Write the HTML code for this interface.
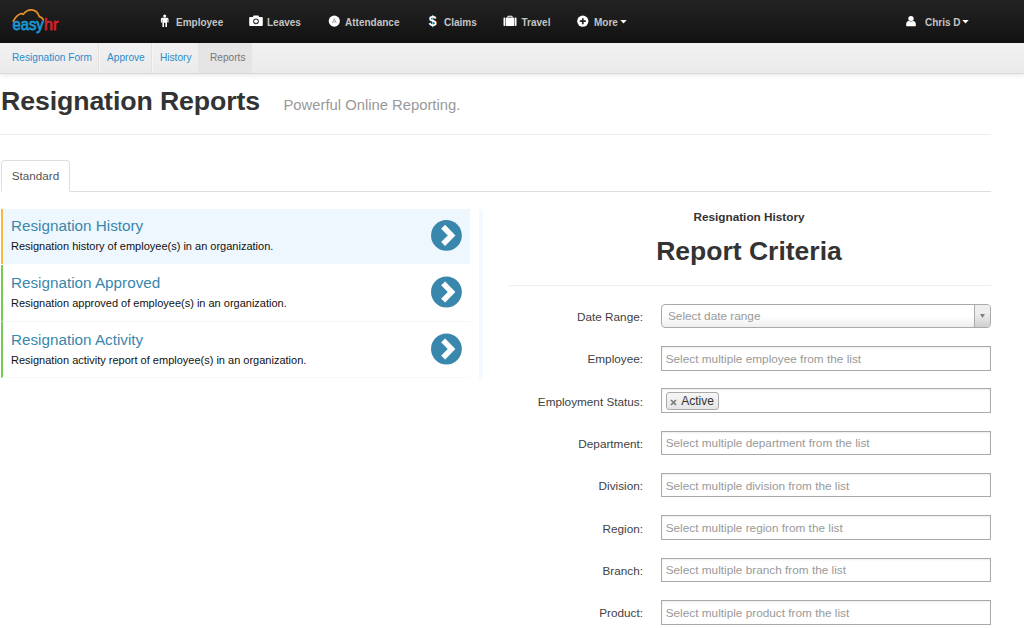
<!DOCTYPE html>
<html><head><meta charset="utf-8">
<style>
*{box-sizing:border-box;margin:0;padding:0}
html,body{width:1024px;height:628px;overflow:hidden;background:#fff}
body{font-family:"Liberation Sans",sans-serif;position:relative;color:#333}
.abs{position:absolute;white-space:nowrap}
#nav{position:absolute;left:0;top:0;width:1024px;height:43px;background:linear-gradient(#222 0,#1b1b1b 50%,#111 100%);}
.ni{position:absolute;top:16.7px;font-size:10px;font-weight:bold;color:#c4c4c4;line-height:12px;white-space:nowrap}
.ic{position:absolute}
#sub{position:absolute;left:0;top:43px;width:1024px;height:30.500px;background:linear-gradient(#f1f1f1,#ebebeb);border-bottom:1px solid #d8d8d8;box-shadow:0 1px 5px rgba(0,0,0,.1)}
.si{position:absolute;top:0;height:29px;line-height:29px;font-size:10.15px;color:#2a8ccb;white-space:nowrap}
.sd{position:absolute;top:0;height:29.500px;background:#e2e2e2;border-right:1px solid #f5f5f5;width:2px}
h1{position:absolute;left:1px;top:84px;font-size:26.7px;line-height:34px;font-weight:bold;color:#333;white-space:nowrap;letter-spacing:-0.1px}
.hr{position:absolute;height:1px;background:#eee}
.tab{position:absolute;left:1px;top:160px;width:69px;height:32px;border:1px solid #dedede;border-bottom:1px solid #fff;border-radius:4px 4px 0 0;background:#fff;font-size:11.7px;line-height:30px;text-align:center;color:#555}
.li{position:absolute;left:1px;width:469.200px;height:56px;border-left:2px solid #76cb55;border-bottom:1px solid #f6f6f6}
.li .t{position:absolute;left:8px;top:8px;font-size:15.25px;line-height:18px;color:#3a87ad;white-space:nowrap}
.li .d{position:absolute;left:8px;top:31.2px;font-size:11px;line-height:13px;color:#111;white-space:nowrap}
.l2 .t{top:8.600px !important}.l2 .d{top:32.300px !important}
.li svg{position:absolute;left:426px;top:9px}.l2 svg{top:10px}
.lab{position:absolute;width:200px;left:443px;text-align:right;font-size:11.75px;line-height:14px;color:#414141;white-space:nowrap}
.inp{position:absolute;left:661px;width:330px;height:24.4px;border:1px solid #aaa;background:#fff;font-size:11.8px;line-height:14px;color:#999;padding-left:3.7px;white-space:nowrap;box-shadow:inset 0 1px 2px rgba(0,0,0,.08)}
</style></head><body>
<div id="nav">
 <svg class="ic" style="left:10px;top:6px" width="54" height="32" viewBox="0 0 54 32">
  <path d="M3.3,15.2 C5,12 7.5,9 10.5,7.8 C11.6,7.3 12.6,7.7 13.3,8.3 C15.5,5.2 18.5,3.8 21.3,3.8 C26,3.8 28.3,7.6 29.3,10.6 C31.3,11 32.7,12.4 33.3,14" fill="none" stroke="#e8912a" stroke-width="1.7" stroke-linecap="round" stroke-linejoin="round"/>
  <text x="2.500" y="24.000" font-family="Liberation Sans" font-size="16" fill="#1a97d2" stroke="#1a97d2" stroke-width=".75" stroke-linejoin="round" textLength="31.200" lengthAdjust="spacingAndGlyphs">easy</text>
  <text x="34.000" y="24.000" font-family="Liberation Sans" font-size="16" fill="#d0222d" stroke="#d0222d" stroke-width=".75" stroke-linejoin="round" textLength="14.300" lengthAdjust="spacingAndGlyphs">hr</text>
 </svg>
 <!-- employee -->
 <svg class="ic" style="left:160px;top:14px" width="10" height="13" viewBox="0 0 10 13"><circle cx="4.7" cy="1.9" r="1.5" fill="#fff"/><path d="M2.3,3.8h4.8c.8,0,1.4.6,1.4,1.4v3.3h-1.2v-3h-.3v7.5h-1.6v-4.2h-1.4v4.2h-1.6v-7.5h-.3v3h-1.2v-3.300c0-.8.600-1.400,1.400-1.400z" fill="#fff"/></svg>
 <div class="ni" style="left:176px">Employee</div>
 <!-- leaves camera -->
 <svg class="ic" style="left:249px;top:15px" width="14" height="12" viewBox="0 0 14 12"><path d="M1.500,2h2.300l.8-1.600h4.800l.8,1.600h2.300c.8,0,1.300.5,1.300,1.300v6.400c0,.8-.5,1.300-1.300,1.300h-11c-.8,0-1.300-.5-1.300-1.300v-6.400c0-.8.500-1.300,1.300-1.300z" fill="#fff"/><circle cx="7" cy="6.300" r="2.900" fill="#333"/><circle cx="7" cy="6.300" r="1.800" fill="#fff"/></svg>
 <div class="ni" style="left:267px">Leaves</div>
 <!-- attendance -->
 <svg class="ic" style="left:328px;top:15px" width="13" height="13" viewBox="0 0 13 13"><circle cx="6.300" cy="6.100" r="5.600" fill="#fff"/><path d="M4.300,8.200l2-4.600l2,4.600M5,6.800h2.600" fill="none" stroke="#999" stroke-width=".8"/></svg>
 <div class="ni" style="left:345px">Attendance</div>
 <!-- claims -->
 <div class="ni" style="left:428.800px;top:13.200px;font-size:14.200px;line-height:16px;color:#fff">$</div>
 <div class="ni" style="left:444px">Claims</div>
 <!-- travel -->
 <svg class="ic" style="left:503px;top:15px" width="14" height="12" viewBox="0 0 14 12"><path d="M4.400,2.700v-1c0-.5.400-.9.900-.9h3.400c.5,0,.9.400.9.900v1h-1v-.9h-3.200v.9z" fill="#fff"/><rect x="0.500" y="2.600" width="1.900" height="8.400" rx=".8" fill="#fff"/><rect x="2.900" y="2.600" width="8.200" height="8.400" fill="#fff"/><rect x="11.600" y="2.600" width="1.900" height="8.400" rx=".8" fill="#fff"/></svg>
 <div class="ni" style="left:521.500px">Travel</div>
 <!-- more -->
 <svg class="ic" style="left:576px;top:15px" width="13" height="13" viewBox="0 0 13 13"><circle cx="6.800" cy="6.200" r="5.600" fill="#fff"/><path d="M6.800,3.200v6M3.800,6.200h6" stroke="#222" stroke-width="1.700" fill="none"/></svg>
 <div class="ni" style="left:594px">More</div>
 <svg class="ic" style="left:619.800px;top:19.700px" width="8" height="4" viewBox="0 0 8 4"><path d="M0.300,0h6.400l-3.200,3.400z" fill="#fff"/></svg>
 <!-- user -->
 <svg class="ic" style="left:905px;top:15px" width="12" height="12" viewBox="0 0 12 12"><circle cx="6" cy="3.600" r="2.700" fill="#fff"/><path d="M1.200,11.200v-2.200c0-1.800,1.300-3,2.700-3.300c.6.600,1.300.9,2.100.9s1.500-.3,2.100-.9c1.400.3,2.700,1.500,2.700,3.300v2.200z" fill="#fff"/></svg>
 <div class="ni" style="left:925px">Chris D</div>
 <svg class="ic" style="left:962.400px;top:19.700px" width="8" height="4" viewBox="0 0 8 4"><path d="M0.300,0h6.400l-3.200,3.400z" fill="#fff"/></svg>
</div>
<div id="sub">
 <div style="position:absolute;left:198.200px;top:0;width:53.600px;height:29.500px;background:#e5e5e5"></div>
 <div class="si" style="left:12px">Resignation Form</div>
 <div class="sd" style="left:98px"></div>
 <div class="si" style="left:107px">Approve</div>
 <div class="sd" style="left:151px"></div>
 <div class="si" style="left:160px">History</div>
 <div class="si" style="left:210px;color:#777">Reports</div>
</div>
<h1>Resignation Reports</h1>
<div class="abs" style="left:283.5px;top:96px;font-size:14.8px;line-height:18px;color:#999">Powerful Online Reporting.</div>
<div class="hr" style="left:0;top:134px;width:991px"></div>
<div class="hr" style="left:1px;top:191px;width:990px;background:#dedede"></div>
<div class="tab">Standard</div>

<div class="li" style="top:209px;height:55.3px;background:#eef6fe;border-left-color:#f8b941;border-bottom:0">
 <div class="t">Resignation History</div><div class="d">Resignation history of employee(s) in an organization.</div>
 <svg width="34" height="34" viewBox="-17.430 -17.380 34 34"><circle r="15.400" fill="#3a87ad"/><path d="M-1.300,-10.300L8.700,0L-1.300,10.300L-5,6.700L1.600,0L-5,-6.700z" fill="#fff" stroke="#fff" stroke-width=".5" stroke-linejoin="round"/></svg>
</div>
<div class="li l2" style="top:265px;height:57px">
 <div class="t">Resignation Approved</div><div class="d">Resignation approved of employee(s) in an organization.</div>
 <svg width="34" height="34" viewBox="-17.430 -17 34 34"><circle r="15.400" fill="#3a87ad"/><path d="M-1.300,-10.300L8.700,0L-1.300,10.300L-5,6.700L1.600,0L-5,-6.700z" fill="#fff" stroke="#fff" stroke-width=".5" stroke-linejoin="round"/></svg>
</div>
<div class="li l2" style="top:322px;height:55.6px;border-bottom-color:#f9f9f9">
 <div class="t">Resignation Activity</div><div class="d">Resignation activity report of employee(s) in an organization.</div>
 <svg width="34" height="34" viewBox="-17.430 -17 34 34"><circle r="15.400" fill="#3a87ad"/><path d="M-1.300,-10.300L8.700,0L-1.300,10.300L-5,6.700L1.600,0L-5,-6.700z" fill="#fff" stroke="#fff" stroke-width=".5" stroke-linejoin="round"/></svg>
</div>
<div style="position:absolute;left:479.200px;top:209px;width:3.800px;height:169.700px;background:#f3f9fe"></div>

<div class="abs" style="left:649px;width:200px;text-align:center;top:210.400px;font-size:11.750px;line-height:14px;font-weight:bold;color:#333">Resignation History</div>
<div class="abs" style="left:549px;width:400px;text-align:center;top:234.200px;font-size:26.500px;line-height:34px;font-weight:bold;color:#333">Report Criteria</div>
<div class="hr" style="left:508.600px;top:285px;width:482.400px"></div>

<div class="lab" style="top:309.5px">Date Range:</div>
<div class="inp" style="top:304px;height:23.600px;line-height:14px;padding-top:3.600px;border-radius:4px;padding-left:6px;background:linear-gradient(#fff 50%,#eee);box-shadow:none">Select date range
 <div style="position:absolute;right:0;top:0;width:16px;height:22px;border-left:1px solid #aaa;border-radius:0 3px 3px 0;background:linear-gradient(#eee 40%,#cfcfcf)"></div>
 <svg style="position:absolute;right:5.400px;top:9.300px" width="5" height="4" viewBox="0 0 5 4"><path d="M0,0h5l-2.500,4z" fill="#808080"/></svg>
</div>
<div class="lab" style="top:352.4px">Employee:</div>
<div class="inp" style="top:346px;height:25px;padding-top:4.81px">Select multiple employee from the list</div>
<div class="lab" style="top:394.5px">Employment Status:</div>
<div class="inp" style="top:388px;height:25px">
 <div style="position:absolute;left:3.9px;top:3px;width:53.3px;height:17.5px;border:1px solid #aaa;border-radius:3px;background:linear-gradient(#f6f6f6,#e6e6e6);color:#333;font-size:12px;line-height:17.2px;padding-left:14.3px">Active</div>
 <svg style="position:absolute;left:7.9px;top:9.9px" width="7" height="7" viewBox="0 0 7 7"><path d="M1,1L6,6M6,1L1,6" stroke="#7a7a7a" stroke-width="1.7" fill="none"/></svg>
</div>
<div class="lab" style="top:436.9px">Department:</div>
<div class="inp" style="top:431px;height:24px;padding-top:4.41px">Select multiple department from the list</div>
<div class="lab" style="top:479.2px">Division:</div>
<div class="inp" style="top:473px;height:24px;padding-top:4.71px">Select multiple division from the list</div>
<div class="lab" style="top:521.5px">Region:</div>
<div class="inp" style="top:515px;height:25px;padding-top:5.01px">Select multiple region from the list</div>
<div class="lab" style="top:563.8px">Branch:</div>
<div class="inp" style="top:558px;height:24px;padding-top:4.31px">Select multiple branch from the list</div>
<div class="lab" style="top:606.1px">Product:</div>
<div class="inp" style="top:600px;height:24.5px;padding-top:4.61px">Select multiple product from the list</div>
</body></html>
